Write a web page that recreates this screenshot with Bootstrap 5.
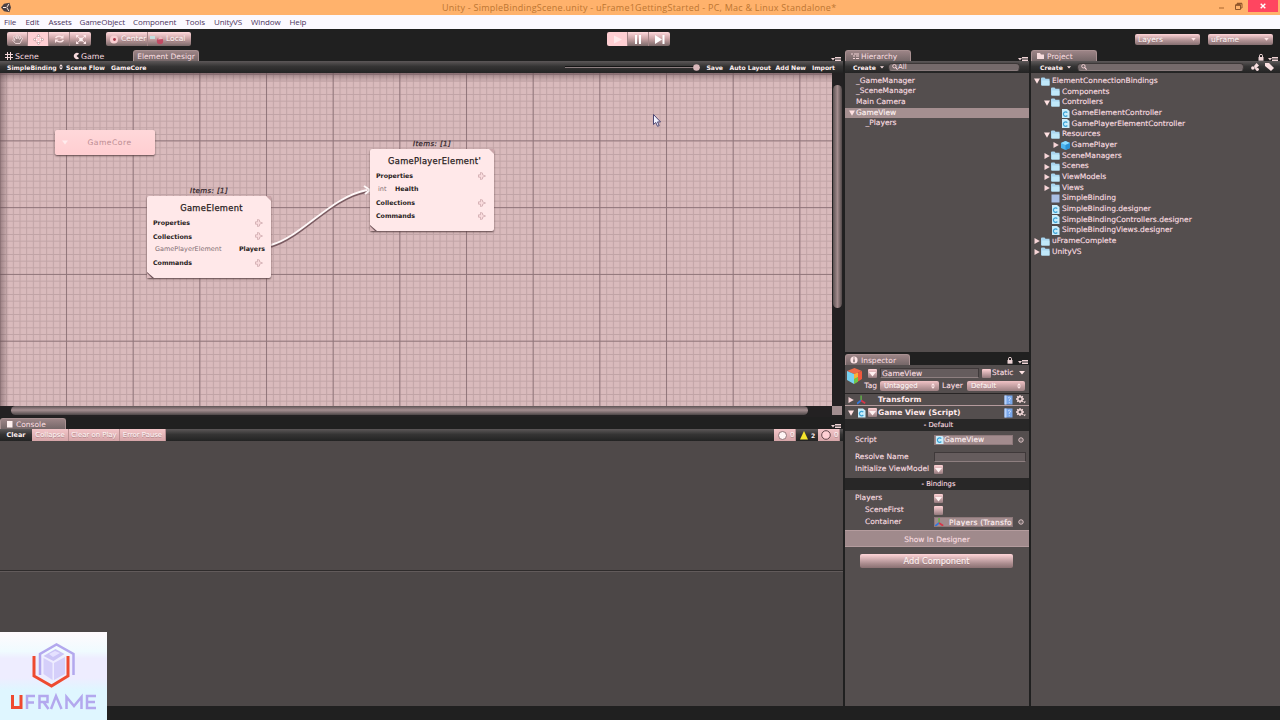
<!DOCTYPE html>
<html lang="en">
<head>
<meta charset="utf-8">
<meta name="viewport" content="width=device-width, initial-scale=1">
<title>Unity - SimpleBindingScene.unity</title>
<link href="https://cdn.jsdelivr.net/npm/bootstrap@5.3.0/dist/css/bootstrap.min.css" rel="stylesheet">
<style>
:root{--ink:#fbdfe1;--panel:#544e4e}
body{width:1280px;height:720px;overflow:hidden;background:#202020;color:var(--ink);font:7.5px/10px "DejaVu Sans",sans-serif;white-space:nowrap}
svg{display:block;flex:none;overflow:visible}
.titlebar{height:15px;background:#ffb26c;color:#bd7632;font:9px/15px "Open Sans",sans-serif}
.titlebar .caption{margin-left:431px;letter-spacing:.24px}
.closebox{width:30px;height:12px;background:#ff4560;color:#fff}
.menubar{height:14px;background:#fbf9ff;color:#4c3560;font:8px/14px "Open Sans",sans-serif;letter-spacing:-.1px;display:grid;grid-template-columns:21.5px 23px 31px 53.5px 52.5px 28.5px 37px 38.5px 30px;padding-left:4px}
.toolbar{height:19px;padding-top:3px}
.gbtn{background:linear-gradient(#ffd9dc,#cfa6a8 45%,#7a6969);color:#fff6f6;height:14px;border-right:1px solid #a38486}
.gbtn:last-child{border-right:0}
.gbtn.on{background:#ffcfd3}
.gbtn,.drop,.mini,.addbtn{text-shadow:0 1px 0 #84656880}
.seg{border-radius:2px;overflow:hidden;height:14px}
.tools{margin-left:7px}.tools .gbtn{width:21px}
.pivots{margin-left:15px}.pivots .gbtn:first-child{width:42px}.pivots .gbtn:last-child{width:43px}
.playset{margin-left:416px}.playset .gbtn{width:21px}
.selects{gap:8px;margin-right:7px;margin-top:2px}
.drop{height:11px;border-radius:2px;background:linear-gradient(#ffd3d7,#b59597 55%,#866f71);padding:0 4px 0 3px;width:65px;color:#fff6f6}
.workarea{display:grid;grid-template-columns:843px 184px 249px;column-gap:2px;height:658px}
.tabrow{height:13px;padding-top:2px}
.tabx{height:11px;border-radius:3px 3px 0 0;background:linear-gradient(#9c8486,#756768);border:1px solid #a99192;border-bottom:0;line-height:11px}
.scene-tab{width:65px;padding-left:5px}.game-tab{width:67px;padding-left:8px}
.scene-tab span,.game-tab span{font-size:7.8px;line-height:14px}
.cons-tabs{height:12px;padding-top:1px}
.strip{height:12px;background:linear-gradient(#5c5758,#353434 45%,#232323);font-weight:bold;font-size:6.1px;line-height:13px;color:#fff0f0}
.slide{width:135px;height:2px;background:#8d7e80;border-top:1px solid #151515}
.designer{height:333px;width:832px;position:relative;overflow:hidden;background:#d9babc}
.node{position:absolute;background:#ffe8e9;border-radius:2px;box-shadow:0 1px 2px #5b4547;color:#271b20;font-size:6.3px;font-weight:bold;width:124px;height:82px;padding:0 6px}
.node .ttl{font-size:8.3px;letter-spacing:.33px;font-weight:normal;height:20.3px;line-height:25px;text-align:center;-webkit-text-stroke:.25px #271b20;padding-left:5px}
.node .ln{height:13.4px;line-height:13.4px}
.node .ln svg{margin-right:2px}
.node .soft{font-weight:normal;color:#7f6d73;font-size:6.5px}
.core{width:100px;height:25px;background:linear-gradient(#ffd8da,#ffced1);color:#bb8c92;font:7.6px/26px "DejaVu Sans",sans-serif;text-align:center;letter-spacing:.5px}
.itemtag{position:absolute;color:#33262b;font:italic 7px/9px "DejaVu Sans",sans-serif;letter-spacing:.4px;-webkit-text-stroke:.25px #33262b}
.vbar{width:11px;height:333px;background:#232122}
.vthumb{margin:12px 1px 0;width:9px;height:223px;border-radius:5px;background:linear-gradient(90deg,#5c5252,#a38c8d 50%,#504848)}
.hbar{height:11px;background:#232122}
.hthumb{margin-left:11px;width:797px;height:9px;border-radius:5px;background:linear-gradient(#5e5455,#a48e90 45%,#4d4647)}
.logpane{height:130px;background:#4f4949;border-bottom:1px solid #2f2c2c}
.detailpane{height:135px;background:#4c4747;border-top:1px solid #625b5b}
.con{background:linear-gradient(#f3c6c9,#d6a5a8);color:#fffafa;font-weight:normal;font-size:6.9px;border-right:1px solid #b98f92;text-align:center;text-shadow:0 1px 0 #b0868a}
.pane{background:var(--panel)}
.search{height:8px;border-radius:5px;background:#756a6b;border:1px solid #3d3838;border-bottom-color:#8a7c7d;line-height:6px;font-size:7px;font-weight:normal;color:var(--ink)}
.treerow{height:10.67px;line-height:10.67px;-webkit-text-stroke:.12px currentColor}
.sel{background:#a58f90;color:#fff2f2}
.irow{display:flex;align-items:center}
.insp{-webkit-text-stroke:.1px currentColor}
.band{height:12px;background:#282727;text-align:center;font-size:6.8px;line-height:12px;padding-left:3px}
.field{height:10px;width:92px;background:#655c5d;border:1px solid #3f393a;border-bottom-color:#8e7f80}
.objf{width:79px;background:#a28b8d;border-color:#8e797b;line-height:9px;overflow:hidden;color:#fff0f1}
.chk{width:9px;height:9px;border-radius:1px;background:linear-gradient(#ffd2d5,#93797c);flex:none}
.lab{width:79px;flex:none}
.mini{height:10px;border-radius:2px;background:linear-gradient(#f0c2c5,#9c7f81);padding:0 4px;font-size:6.9px;color:#fff6f6}
.comp{font-weight:bold;font-size:7.6px;color:#ffe9ea;-webkit-text-stroke:0}
.showbtn{height:17px;line-height:17px;background:#a08a8c;border-top:1px solid #b59c9e;border-bottom:1px solid #b59c9e;text-align:center}
.addbtn{height:14px;line-height:15px;width:153px;margin:7px 0 0 15px;border-radius:2px;background:linear-gradient(#ffd5d8,#a98b8d 70%,#8a7072);text-align:center;font-size:8.2px;color:#fff3f3}
.logo{position:absolute;left:0;top:632px;width:107px;height:88px;background:linear-gradient(#fffafd 0,#f0fbff 22%,#eeedff 30%,#eeedff 52%,#dff6ff 66%)}
</style>
</head>
<body>
<svg width="0" height="0" class="position-absolute">
<defs>
<symbol id="menu" viewBox="0 0 10 6"><path d="M0 2h4L2 4.500z" fill="#f0d4d6"/><path d="M4 1.500h6M4 3h6M4 4.500h6" stroke="#f0d4d6"/></symbol>
<symbol id="folder" viewBox="0 0 9 9"><path d="M0 1.500Q0 .5 1 .5h2.500l1 1.200H8.500V8.500H.5Q0 8.500 0 8z" fill="#a9d6f0"/><path d="M1 3.500h7.500V8.500H1z" fill="#c0e8f9"/></symbol>
<symbol id="script" viewBox="0 0 9 9"><path d="M1 0h5l2.500 2v7H1z" fill="#c9edfb"/><path d="M6.300 3.700A2.200 2.200 0 1 0 6.300 6.500" fill="none" stroke="#3ba3d6" stroke-width="1.200"/></symbol>
<symbol id="asset" viewBox="0 0 9 9"><path d="M.5.5h8v8h-8z" fill="#a9bfe4"/></symbol>
<symbol id="prefab" viewBox="0 0 9 9"><path d="M4.500 0L9 2v5L4.500 9 0 7V2z" fill="#4bb4ee"/><path d="M4.500 0L9 2 4.500 4 0 2z" fill="#8cdcff"/><path d="M4.500 4v5L9 7V2z" fill="#2b92d4"/></symbol>
<symbol id="open" viewBox="0 0 6 6"><path d="M0 .5h6L3 5.800z" fill="#ffe1e2"/></symbol>
<symbol id="shut" viewBox="0 0 6 6"><path d="M.5 0v6L5.800 3z" fill="#f7d5d7"/></symbol>
<symbol id="tri" viewBox="0 0 6 4"><path d="M0 0h6L3 3.500z" fill="#ffe4e5"/></symbol>
<symbol id="updown" viewBox="0 0 5 7"><path d="M0 3l2.500-3L5 3zM0 4l2.500 3L5 4z" fill="#ffe8e9"/></symbol>
<symbol id="lens" viewBox="0 0 7 7"><circle cx="2.800" cy="2.600" r="2" fill="none" stroke="#ffdadd"/><path d="M4.200 4l2.300 2.500" stroke="#ffdadd" stroke-width="1.200"/></symbol>
<symbol id="lock" viewBox="0 0 6 7"><path d="M.5 3h5v3.700h-5z" fill="#ecd3d4"/><path d="M1.500 3V1.800a1.500 1.500 0 0 1 3 0V3" fill="none" stroke="#ecd3d4"/></symbol>
<symbol id="book" viewBox="0 0 9 10"><path d="M.5.5h8v9h-8z" fill="#79a6ea"/><path d="M.5.5h2v9h-2z" fill="#b9d3fb"/><path d="M4 3q1.500-1.500 2.500 0 0 1-1.200 2v1M5.300 7.200v1" fill="none" stroke="#d8e8ff" stroke-width=".8"/></symbol>
<symbol id="gear" viewBox="0 0 10 9"><circle cx="4" cy="4" r="2.200" fill="none" stroke="#f5dadb" stroke-width="1.500"/><path d="M4 0v1.500M4 6.500V8M0 4h1.500M6.500 4H8M1.200 1.200l1 1M5.800 5.800l1 1M6.800 1.200l-1 1M1.200 6.800l1-1" stroke="#f5dadb" stroke-width="1.300"/><path d="M7 6.500h3L8.500 8.300z" fill="#f5dadb"/></symbol>
<symbol id="plus" viewBox="0 0 8 8"><path d="M2.500.5L4.500 1v1.700L7.500 4 4.500 5.300V7l-2 .5V5.200H.5V2.800h2z" fill="#fbdcde" stroke="#c9a4a8" stroke-width=".7"/></symbol>
<symbol id="check" viewBox="0 0 9 9"><path d="M1 3h7L4.500 7.500z" fill="#fff2f2"/></symbol>
<symbol id="target" viewBox="0 0 6 6"><circle cx="3" cy="3" r="2.200" fill="none" stroke="#e6cbcd" stroke-width="1"/><circle cx="3" cy="3" r=".6" fill="#e6cbcd"/></symbol>
<symbol id="axes" viewBox="0 0 11 11"><path d="M5 6V0" stroke="#62b04a" stroke-width="1.800"/><path d="M5 6L0 10" stroke="#3276dc" stroke-width="2.200"/><path d="M5 6l5 3.500" stroke="#d73648" stroke-width="2.200"/></symbol>
<symbol id="cornerBL" viewBox="0 0 7 6"><path d="M0 0v6h7z" fill="#6e5358"/><path d="M0 1v5h5z" fill="#dab8bb"/></symbol>
<symbol id="cornerTR" viewBox="0 0 5 5"><path d="M0 0h5v5z" fill="#c9a5a9"/></symbol>
</defs>
</svg>

<header class="titlebar d-flex">
  <svg width="11" height="11" viewBox="0 0 11 11" class="mt-auto mb-auto"><path d="M1 5.500L4 1.800 9.500.8 11 5.500 9.500 10.200 4 9.200z" fill="#4c4144"/><path d="M3 5h3.300V6H3zM6.500 5L8.500 1.800l.8.500-2 3zM6.500 6l2 3.200.8-.5-2-3z" fill="#ffe9de"/></svg>
  <span class="caption">Unity - SimpleBindingScene.unity - uFrame1GettingStarted - PC, Mac &amp; Linux Standalone*</span>
  <div class="d-flex ms-auto" style="margin-right:2px">
    <svg width="6" height="12" viewBox="0 0 6 12" style="margin-right:10px"><path d="M0 8h5" stroke="#a9672f"/></svg>
    <svg width="8" height="12" viewBox="0 0 8 12" style="margin-right:5px"><path d="M.5 5h5v4.500h-5zM2 5V3.500h5V8H5.500" fill="none" stroke="#90562b"/><path d="M2 3.500h5M.5 5h5" stroke="#90562b" stroke-width="1.400"/></svg>
    <div class="closebox d-flex justify-content-center align-items-center"><svg width="6" height="6" viewBox="0 0 6 6"><path d="M.7.7l4.600 4.600M5.300.7L.7 5.300" stroke="#fff" stroke-width="1.400"/></svg></div>
  </div>
</header>
<nav class="menubar"><span>File</span><span>Edit</span><span>Assets</span><span>GameObject</span><span>Component</span><span>Tools</span><span>UnityVS</span><span>Window</span><span>Help</span></nav>

<div class="toolbar d-flex">
  <div class="seg d-flex tools">
    <div class="gbtn d-flex align-items-center justify-content-center"><svg width="13" height="11" viewBox="0 0 13 11"><path d="M4.500 9.500L1.500 6l1-.8L4 6.500 2.500 2.500l1-.4L5.500 5 5.300 1l1.200-.2L7 4.800 8.500 1.400l1 .4-.9 3.600L10.800 3.500l.8.600L9 9.500z" fill="#9b8586" stroke="#f9e2e3" stroke-width=".8"/></svg></div>
    <div class="gbtn on d-flex align-items-center justify-content-center"><svg width="11" height="11" viewBox="0 0 11 11"><path d="M5.500 1v9M1 5.500h9" stroke="#fff" stroke-width="1.200" stroke-dasharray="3 3"/><path d="M5.500 0l1.700 2.500H3.800zM5.500 11l1.700-2.500H3.800zM0 5.500l2.500-1.700v3.400zM11 5.500L8.500 3.800v3.400z" fill="#fffafa" stroke="#b58f92" stroke-width=".6"/></svg></div>
    <div class="gbtn d-flex align-items-center justify-content-center"><svg width="11" height="10" viewBox="0 0 11 10"><path d="M1.500 4Q4 .8 8 3M9.500 6Q7 9.200 3 7" fill="none" stroke="#ffe7e8" stroke-width="1.300"/><path d="M9.500 1v3.500H6zM1 9V5.500h3.500z" fill="#ffe7e8"/></svg></div>
    <div class="gbtn d-flex align-items-center justify-content-center"><svg width="12" height="11" viewBox="0 0 12 11"><path d="M2 2l8 7M10 2L2 9" stroke="#ffe7e8"/><path d="M4.300 3.800h3.400v3.400H4.300z" fill="#fff1f1"/><path d="M1 1h3L1 4zM11 1H8l3 3zM1 10h3L1 7zM11 10H8l3-3z" fill="#ffe7e8"/></svg></div>
  </div>
  <div class="seg d-flex pivots">
    <div class="gbtn d-flex align-items-center"><svg width="15" height="11" viewBox="0 0 15 11"><circle cx="8" cy="5.500" r="4" fill="#f9cfd2"/><circle cx="8.500" cy="5.500" r="1.400" fill="#a93b4b"/></svg>Center</div>
    <div class="gbtn d-flex align-items-center"><svg width="18" height="11" viewBox="0 0 18 11"><path d="M2 2h5v3H2z" fill="#c5dede"/><circle cx="12" cy="7" r="3.200" fill="#c04a63"/><path d="M9.500 5.500l3-3.500 2.500 3z" fill="#eab7bd"/></svg>Local</div>
  </div>
  <div class="seg d-flex playset">
    <div class="gbtn on d-flex align-items-center justify-content-center"><svg width="9" height="9" viewBox="0 0 9 9"><path d="M1 .5v8l8-4z" fill="#ffe9ea"/></svg></div>
    <div class="gbtn d-flex align-items-center justify-content-center"><svg width="8" height="9" viewBox="0 0 8 9"><path d="M2 0v9M6 0v9" stroke="#fff" stroke-width="2"/></svg></div>
    <div class="gbtn d-flex align-items-center justify-content-center"><svg width="10" height="9" viewBox="0 0 10 9"><path d="M0 0v9l7-4.500z" fill="#fff"/><path d="M8.500 0v9" stroke="#fff" stroke-width="2"/></svg></div>
  </div>
  <div class="d-flex ms-auto selects">
    <div class="drop d-flex align-items-center justify-content-between">Layers<svg width="5" height="3"><use href="#tri"/></svg></div>
    <div class="drop d-flex align-items-center justify-content-between">uFrame<svg width="5" height="3"><use href="#tri"/></svg></div>
  </div>
</div>

<main class="workarea">
  <section>
    <div class="tabrow d-flex">
      <div class="scene-tab d-flex"><svg width="8" height="8" viewBox="0 0 8 8" style="margin:2px 2px 0 0"><path d="M2.500 0v8M5.500 0v8M0 2.500h8M0 5.500h8" stroke="#f6d9db"/></svg><span>Scene</span></div>
      <div class="game-tab d-flex"><svg width="7" height="8" viewBox="0 0 8 8" style="margin:2px 1px 0 0"><path d="M4 4L7 1.500A3.500 3.500 0 1 0 7 6.500z" fill="#f6d9db"/></svg><span>Game</span></div>
      <div class="tabx text-center" style="width:66px;margin-left:1px">Element Desigr</div>
      <svg class="ms-auto" width="10" height="6" style="margin:6px 2px 0 0"><use href="#menu"/></svg>
    </div>
    <div class="strip d-flex align-items-center">
      <span class="d-flex align-items-center" style="margin-left:7px;width:59px">SimpleBinding<svg width="4" height="6" style="margin-left:2px"><use href="#updown"/></svg></span><span style="width:45px">Scene Flow</span><span>GameCore</span>
      <div class="ms-auto d-flex align-items-center"><div class="slide"></div><svg width="7" height="7" viewBox="0 0 7 7" style="margin-left:-7px"><circle cx="3.500" cy="3.500" r="3.300" fill="#d9b8bb"/></svg></div>
      <span class="text-end" style="width:23px">Save</span><span class="text-end" style="width:48px">Auto Layout</span><span class="text-end" style="width:35px">Add New</span><span class="text-end" style="width:29px;margin-right:8px">Import</span>
    </div>
    <div class="d-flex">
      <div class="designer">
        <svg width="832" height="333" class="position-absolute top-0 start-0">
          <defs>
            <pattern id="minor" width="6.667" height="6.667" patternUnits="userSpaceOnUse" x="-.5" y="1"><path d="M.5 0v6.667M0 .5h6.667" stroke="#a08588" stroke-opacity=".42" stroke-width="1"/></pattern>
            <pattern id="major" width="66.667" height="66.800" patternUnits="userSpaceOnUse" x="-.7" y=".5"><path d="M.5 0v66.800M0 .5h66.667" stroke="#765d62" stroke-opacity=".66" stroke-width="1"/></pattern>
            <linearGradient id="edge" x2="0" y2="1"><stop offset="0" stop-color="#5b4549" stop-opacity=".5"/><stop offset="1" stop-color="#5b4549" stop-opacity="0"/></linearGradient>
            <linearGradient id="edgeL"><stop offset="0" stop-color="#5b4549" stop-opacity=".5"/><stop offset="1" stop-color="#5b4549" stop-opacity="0"/></linearGradient>
          </defs>
          <rect width="832" height="333" fill="url(#minor)"/><rect width="832" height="333" fill="url(#major)"/>
          <rect width="832" height="9" fill="url(#edge)"/><rect width="9" height="333" fill="url(#edgeL)"/>
          <path d="M271 172C303 163 330 124 367 117" transform="translate(0 1.500)" fill="none" stroke="#7b5c62" stroke-width="2.500"/>
          <path d="M271 172C303 163 330 124 367 117M364 113l6 4-5 4" fill="none" stroke="#fff8f8" stroke-width="1.900"/>
        </svg>
        <div class="node core" style="left:55px;top:57px"><svg class="position-absolute" width="6" height="5" viewBox="0 0 6 4" style="left:7px;top:10px"><path d="M0 0h6L3 4z" fill="#ffeced"/></svg><span style="margin-left:9px">GameCore</span></div>
        <div class="itemtag" style="left:190px;top:114px">Items: [1]</div>
        <div class="node" style="left:147px;top:123px">
          <div class="ttl">GameElement</div>
          <div class="ln d-flex align-items-center justify-content-between">Properties<svg width="8" height="8"><use href="#plus"/></svg></div>
          <div class="ln d-flex align-items-center justify-content-between">Collections<svg width="8" height="8"><use href="#plus"/></svg></div>
          <div class="ln d-flex justify-content-between" style="line-height:12px"><span class="soft" style="padding-left:2px">GamePlayerElement</span><span>Players</span></div>
          <div class="ln d-flex align-items-center justify-content-between">Commands<svg width="8" height="8"><use href="#plus"/></svg></div>
          <svg class="position-absolute bottom-0 start-0" width="7" height="6"><use href="#cornerBL"/></svg>
          <svg class="position-absolute top-0 end-0" width="5" height="5"><use href="#cornerTR"/></svg>
        </div>
        <div class="itemtag" style="left:413px;top:67px">Items: [1]</div>
        <div class="node" style="left:370px;top:76px">
          <div class="ttl">GamePlayerElement'</div>
          <div class="ln d-flex align-items-center justify-content-between">Properties<svg width="8" height="8"><use href="#plus"/></svg></div>
          <div class="ln d-flex" style="line-height:12px"><span class="soft" style="width:19px;padding-left:2px">int</span><span>Health</span></div>
          <div class="ln d-flex align-items-center justify-content-between">Collections<svg width="8" height="8"><use href="#plus"/></svg></div>
          <div class="ln d-flex align-items-center justify-content-between">Commands<svg width="8" height="8"><use href="#plus"/></svg></div>
          <svg class="position-absolute bottom-0 start-0" width="7" height="6"><use href="#cornerBL"/></svg>
          <svg class="position-absolute top-0 end-0" width="5" height="5"><use href="#cornerTR"/></svg>
        </div>
        <svg class="position-absolute" width="8" height="13" viewBox="0 0 8 13" style="left:653px;top:41px"><path d="M.5.5v10l2.300-2 1.700 3.800 1.700-.7-1.700-3.700h3z" fill="#f3f3ff" stroke="#3b3768" stroke-width=".9"/></svg>
      </div>
      <div class="vbar d-flex"><div class="vthumb"></div></div>
    </div>
    <div class="hbar d-flex"><div class="hthumb"></div><svg class="ms-auto" width="11" height="10"><path d="M0 0h10v9H0z" fill="#a18d8f"/></svg></div>
    <div class="cons-tabs d-flex">
      <div class="tabx d-flex align-items-center" style="width:66px;padding-left:6px"><svg width="6" height="7"><path d="M0 0h5.500v6.500H0z" fill="#fff0f0"/></svg><span style="margin-left:3px;padding-top:1px">Console</span></div>
      <svg class="ms-auto" width="10" height="6" style="margin:5px 2px 0 0"><use href="#menu"/></svg>
    </div>
    <div class="strip d-flex">
      <span class="text-center" style="width:32px;font-size:6.5px">Clear</span><span class="con" style="width:37px">Collapse</span><span class="con" style="width:51px">Clear on Play</span><span class="con" style="width:46px">Error Pause</span>
      <span class="con ms-auto d-flex align-items-center" style="width:22px;padding-left:4px"><svg width="9" height="9"><circle cx="4.500" cy="4.500" r="4" fill="#fff5f5" stroke="#967579"/></svg><span style="margin-left:3px">0</span></span>
      <span class="d-flex align-items-center" style="width:22px;padding-left:4px"><svg width="8" height="9"><path d="M4 0l4 8.500H0z" fill="#f5e52c"/></svg><span style="margin-left:3px">2</span></span>
      <span class="con d-flex align-items-center" style="width:22px;padding-left:3px;margin-right:3px"><svg width="10" height="10"><circle cx="5" cy="5" r="4.300" fill="#ffd0d4" stroke="#66494d"/></svg><span style="margin-left:3px">0</span></span>
    </div>
    <div class="logpane"></div><div class="detailpane"></div>
  </section>

  <section class="d-flex flex-column">
    <div class="tabrow d-flex">
      <div class="tabx d-flex align-items-center" style="width:66px;padding-left:5px"><svg width="8" height="7"><path d="M0 1h2M2 3h2M2 5.500h2M3 1h5M5 3h3M5 5.500h3" stroke="#f2d3d5"/></svg><span style="margin-left:2px">Hierarchy</span></div>
      <svg class="ms-auto" width="10" height="6" style="margin:6px 1px 0 0"><use href="#menu"/></svg>
    </div>
    <div class="strip d-flex align-items-center"><span class="d-flex align-items-center" style="width:43px;padding-left:8px">Create<svg width="4" height="3" style="margin-left:4px"><use href="#tri"/></svg></span><div class="search d-flex align-items-center" style="width:132px;padding-left:3px"><svg width="6" height="6"><use href="#lens"/></svg>All</div></div>
    <div class="pane" id="hier" style="height:279px;padding-top:2.700px"></div>
    <div class="tabrow d-flex">
      <div class="tabx d-flex align-items-center" style="width:65px;padding-left:4px"><svg width="8" height="8"><circle cx="4" cy="4" r="3.600" fill="#ffe6e7"/><path d="M4 1.500v1M4 3.300v3" stroke="#6b5a5b" stroke-width="1.300"/></svg><span style="margin-left:3px">Inspector</span></div>
      <svg class="ms-auto" width="6" height="7" style="margin:3px 5px 0 0"><use href="#lock"/></svg><svg width="10" height="6" style="margin:5px 1px 0 0"><use href="#menu"/></svg>
    </div>
    <div class="pane flex-grow-1 insp" style="padding-top:1px">
      <div class="d-flex" style="height:27px">
        <svg width="15" height="16" viewBox="0 0 15 16" style="margin:2px 0 0 2px"><path d="M0 3l7.500-3L15 3 7 6z" fill="#ee6a48"/><path d="M0 3l7 3v10l-7-4z" fill="#79d2f1"/><path d="M7 6l8-3v8l-8 5z" fill="#f0583c"/><path d="M7 6l4-1.500v4.800l-4 2z" fill="#f7b13a"/><path d="M7 11l4-2v4.700L7 16z" fill="#6cc84a"/></svg>
        <div class="flex-grow-1">
          <div class="irow" style="height:14px;padding-left:6px"><div class="chk"><svg width="9" height="9"><use href="#check"/></svg></div><div class="field" style="width:99px;margin-left:3px;line-height:9px;padding-left:1px">GameView</div><div class="chk" style="margin-left:3px"></div><span style="margin-left:1px">Static</span><svg width="6" height="4" style="margin-left:6px"><use href="#tri"/></svg></div>
          <div class="irow" style="height:12px"><span class="text-end" style="width:15px;margin-right:3px">Tag</span><div class="mini irow justify-content-between" style="width:59px">Untagged<svg width="4" height="6"><use href="#updown"/></svg></div><span style="margin:0 4px 0 3px">Layer</span><div class="mini irow justify-content-between" style="width:58px">Default<svg width="4" height="6"><use href="#updown"/></svg></div></div>
        </div>
      </div>
      <div class="irow comp" style="height:13px;padding-left:3px;border-top:1px solid #282525;border-bottom:1px solid #b59b9d"><svg width="6" height="6"><use href="#shut"/></svg><svg width="9" height="10" style="margin-left:3px"><use href="#axes"/></svg><span style="margin-left:12px">Transform</span><svg class="ms-auto" width="9" height="10"><use href="#book"/></svg><svg width="10" height="9" style="margin:0 3px 0 3px"><use href="#gear"/></svg></div>
      <div class="irow comp" style="height:13px;padding-left:3px"><svg width="6" height="6"><use href="#open"/></svg><svg width="9" height="10" style="margin-left:3px"><use href="#script"/></svg><div class="chk" style="margin-left:2px"><svg width="9" height="9"><use href="#check"/></svg></div><span style="margin-left:1px">Game View (Script)</span><svg class="ms-auto" width="9" height="10"><use href="#book"/></svg><svg width="10" height="9" style="margin:0 3px 0 3px"><use href="#gear"/></svg></div>
      <div class="band">- Default</div>
      <div style="padding-left:10px">
        <div class="irow" style="height:13px;margin-top:2px"><span class="lab">Script</span><div class="field objf irow"><svg width="9" height="9"><use href="#script"/></svg>GameView</div><svg width="6" height="6" style="margin-left:5px"><use href="#target"/></svg></div>
        <div class="irow" style="height:12px;margin-top:5px"><span class="lab">Resolve Name</span><div class="field"></div></div>
        <div class="irow" style="height:12px"><span class="lab">Initialize ViewModel</span><div class="chk"><svg width="9" height="9"><use href="#check"/></svg></div></div>
      </div>
      <div class="band" style="margin-top:3px">- Bindings</div>
      <div style="padding-left:10px;margin-top:2px">
        <div class="irow" style="height:12px"><span class="lab">Players</span><div class="chk"><svg width="9" height="9"><use href="#check"/></svg></div></div>
        <div class="irow" style="height:12px"><span class="lab" style="padding-left:10px">SceneFirst</span><div class="chk"></div></div>
        <div class="irow" style="height:12px"><span class="lab" style="padding-left:10px">Container</span><div class="field objf irow"><svg width="9" height="9"><use href="#axes"/></svg><span style="padding-left:1px;letter-spacing:.2px">_Players (Transfo</span></div><svg width="6" height="6" style="margin-left:5px"><use href="#target"/></svg></div>
      </div>
      <div class="showbtn" style="margin-top:2px">Show In Designer</div>
      <div class="addbtn">Add Component</div>
    </div>
  </section>

  <section class="d-flex flex-column">
    <div class="tabrow d-flex">
      <div class="tabx d-flex align-items-center" style="width:66px;padding-left:5px"><svg width="7" height="6"><path d="M0 0h3l1 1.500h3V6H0z" fill="#f7dcdd"/></svg><span style="margin-left:3px">Project</span></div>
      <svg class="ms-auto" width="6" height="7" style="margin:4px 4px 0 0"><use href="#lock"/></svg><svg width="10" height="6" style="margin:6px 2px 0 0"><use href="#menu"/></svg>
    </div>
    <div class="strip d-flex align-items-center"><span class="d-flex align-items-center" style="width:46px;padding-left:9px">Create<svg width="4" height="3" style="margin-left:4px"><use href="#tri"/></svg></span><div class="search d-flex align-items-center" style="width:167px;padding-left:3px"><svg width="6" height="6"><use href="#lens"/></svg></div>
      <svg width="8" height="8" viewBox="0 0 8 8" style="margin-left:7px"><path d="M5.500 0L8 2.500 4 6.500 3 3z" fill="#f9dfe0"/><circle cx="1.800" cy="5" r="1.700" fill="#f9dfe0"/><circle cx="6.300" cy="6.300" r="1.600" fill="#f9dfe0"/></svg><svg width="9" height="8" viewBox="0 0 9 8" style="margin-left:6px"><path d="M0 0h4l5 5-3 3-6-5z" fill="#f9dfe0"/></svg></div>
    <div class="pane flex-grow-1" id="proj" style="padding-top:3px"></div>
  </section>
</main>

<div class="logo"><svg width="107" height="88" viewBox="0 0 107 88">
  <path d="M40 43V22L56.500 12.500 73.500 22V43" fill="none" stroke="#b3a8ee" stroke-width="2.500"/>
  <path d="M43.500 26l9 5v17l-9-6zM65 25l-11 6v17l11-6z" fill="#d5cffa"/><path d="M43.500 24l12-7 9 5-11 7z" fill="#cbc4f6"/><path d="M49 22l6-3 5 2-7 4z" fill="#e5e1ff"/>
  <path d="M34 24V44L51.500 54 68 44V24" fill="none" stroke="#ee4a30" stroke-width="3"/>
  <path d="M12.500 63v12.500h8.500V63" fill="none" stroke="#ee4a30" stroke-width="3"/>
  <g fill="none" stroke="#b3a8ee" stroke-width="2.500"><path d="M27 77V64h8M27 70.500h7"/><path d="M39.500 77V64h8v6h-8M43.500 70l5 7"/><path d="M51 77l5-13 5.500 13"/><path d="M66.500 77V65l7.500 9 7.500-9v12"/><path d="M96 64h-9v12h9M87 70h8"/></g>
</svg></div>

<script src="https://cdn.jsdelivr.net/npm/bootstrap@5.3.0/dist/js/bootstrap.bundle.min.js"></script>
<script>
// Each row: [text, left edge of the label, icon, arrow state, selected]
const project = [
  ["ElementConnectionBindings",21,"folder","open"],["Components",31,"folder",""],["Controllers",31,"folder","open"],
  ["GameElementController",40.500,"script",""],["GamePlayerElementController",40.500,"script",""],["Resources",31,"folder","open"],
  ["GamePlayer",40.500,"prefab","shut"],["SceneManagers",31,"folder","shut"],["Scenes",31,"folder","shut"],["ViewModels",31,"folder","shut"],
  ["Views",31,"folder","shut"],["SimpleBinding",31,"asset",""],["SimpleBinding.designer",31,"script",""],
  ["SimpleBindingControllers.designer",31,"script",""],["SimpleBindingViews.designer",31,"script",""],
  ["uFrameComplete",21,"folder","shut"],["UnityVS",21,"folder","shut"]];
const hierarchy = [["_GameManager",11,"",""],["_SceneManager",11,"",""],["Main Camera",11,"",""],["GameView",11,"","open",true],["_Players",20.500,"",""]];
function fill(id, rows) {
  document.getElementById(id).innerHTML = rows.map(([t,x,icon,arrow,on]) => {
    const lead = x - (icon ? 11 : 0) - 7.5;
    return `<div class="treerow d-flex align-items-center${on ? " sel" : ""}" style="padding-left:${lead}px">
      <svg width="6" height="6" style="margin-right:1.5px">${arrow ? `<use href="#${arrow}"/>` : ""}</svg>
      ${icon ? `<svg width="9" height="9" style="margin-right:2px"><use href="#${icon}"/></svg>` : ""}<span>${t}</span></div>`;
  }).join("");
}
fill("proj", project);
fill("hier", hierarchy);
</script>
</body>
</html>
